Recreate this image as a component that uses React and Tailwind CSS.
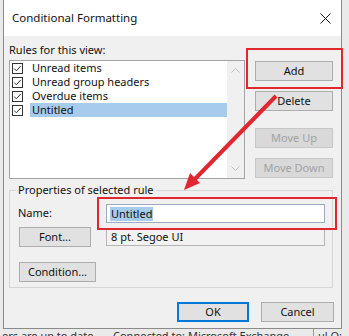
import React from "react";

const font = { fontFamily: '"Noto Sans", "Open Sans", sans-serif' };

function CheckBox() {
  return (
    <svg width="11" height="11" viewBox="0 0 11 11" className="flex-none">
      <rect x="0.5" y="0.5" width="10" height="10" fill="#fff" stroke="#333" />
      <path d="M2.2 5.6 L4.4 7.8 L8.8 2.9" fill="none" stroke="#333" strokeWidth="1" />
    </svg>
  );
}

function Knopf(props) {
  let cls = "flex items-center justify-center h-[20px] text-[11px] border ";
  if (props.disabled) {
    cls += "bg-[#d9d9d9] border-[#c6c6c6] text-[#a2a2a2]";
  } else if (props.focused) {
    cls += "bg-[#e1e1e1] border-2 border-[#0078d7] text-[#111]";
  } else {
    cls += "bg-[#e1e1e1] border-[#adadad] text-[#111]";
  }
  return <div className={cls + " " + props.className}>{props.children}</div>;
}

const regeln = [
  { name: "Unread items" },
  { name: "Unread group headers" },
  { name: "Overdue items" },
  { name: "Untitled", selected: true },
];

export default function App() {
  return (
    <div
      className="relative w-[349px] h-[336px] overflow-hidden bg-[#eaeaea] text-[#111]"
      style={font}
    >
      {/* dialog */}
      <div className="ml-[3px] w-[339px] h-[329px] flex flex-col border-x border-b border-[#8a8a8a] bg-[#f0f0f0]">
        <div className="h-[36px] flex-none bg-white flex items-center justify-between pl-[8px] pr-[10px]">
          <span className="text-[11.5px]">Conditional Formatting</span>
          <svg width="11" height="11" viewBox="0 0 11 11">
            <path d="M0.5 0.5 L10.5 10.5 M10.5 0.5 L0.5 10.5" stroke="#111" strokeWidth="1" />
          </svg>
        </div>

        <div className="flex flex-col pl-[5px] pr-[7px] pt-[6px]">
          <div className="h-[16px] leading-[16px] text-[11px] mb-[2px]">Rules for this view:</div>

          <div className="flex">
            {/* list */}
            <div className="w-[236px] h-[119px] flex border border-[#a3a3a3] bg-white">
              <div className="flex-1 flex flex-col">
                {regeln.map((r) => (
                  <div key={r.name} className="h-[14px] flex items-center pl-[2px]">
                    <CheckBox />
                    <span
                      className={
                        "ml-[7px] flex-1 h-[14px] leading-[14px] text-[11px] pl-[2px] " +
                        (r.selected ? "bg-[#a6cbeb]" : "")
                      }
                    >
                      {r.name}
                    </span>
                  </div>
                ))}
              </div>
              <div className="w-[17px] flex flex-col items-center justify-between py-[7px] bg-[#f0f0f0]">
                <svg width="9" height="5" viewBox="0 0 9 5">
                  <path d="M0.5 4.5 L4.5 0.5 L8.5 4.5" fill="none" stroke="#c0c0c0" />
                </svg>
                <svg width="9" height="5" viewBox="0 0 9 5">
                  <path d="M0.5 0.5 L4.5 4.5 L8.5 0.5" fill="none" stroke="#c0c0c0" />
                </svg>
              </div>
            </div>

            {/* buttons */}
            <div className="ml-[10px] w-[78px] flex flex-col">
              <Knopf className="mt-[1px]">Add</Knopf>
              <Knopf className="mt-[10px]">Delete</Knopf>
              <Knopf className="mt-[17px]" disabled>Move Up</Knopf>
              <Knopf className="mt-[10px]" disabled>Move Down</Knopf>
            </div>
          </div>

          {/* group box */}
          <fieldset className="mt-[3px] w-[324px] border border-[#d5d5d5] pt-[6px] pb-[5px]">
            <legend className="ml-[6px] px-[2px] h-[16px] leading-[16px] text-[11px]">
              Properties of selected rule
            </legend>
            <div className="pl-[8px]">
              <div className="flex items-center">
                <div className="w-[88px] text-[11px]">Name:</div>
                <div className="w-[219px] h-[19px] flex items-center border border-[#9aaabf] bg-white pl-[3px]">
                  <span className="bg-[#a6cbeb] h-[14px] leading-[14px] text-[11px] px-[1px]">Untitled</span>
                </div>
              </div>
              <div className="flex items-center mt-[4px]">
                <div className="w-[88px]">
                  <Knopf className="ml-[1px] w-[72px]">Font...</Knopf>
                </div>
                <div className="w-[219px] h-[18px] flex items-center border border-[#b5b5b5] bg-[#f2f2f2] pl-[4px] text-[11px]">
                  8 pt. Segoe UI
                </div>
              </div>
              <Knopf className="mt-[15px] ml-[1px] w-[77px]">Condition...</Knopf>
            </div>
          </fieldset>

          <div className="flex justify-end mt-[14px]">
            <Knopf className="w-[72px]" focused>OK</Knopf>
            <Knopf className="w-[73px] ml-[12px]">Cancel</Knopf>
          </div>
        </div>
      </div>

      {/* status bar of the window behind */}
      <div className="h-[7px] overflow-hidden flex text-[11px] leading-[13px] text-[#333]">
        <span className="w-[113px] pl-[2px] whitespace-nowrap overflow-hidden">ers are up to date.</span>
        <span className="w-[200px] whitespace-nowrap">Connected to: Microsoft Exchange</span>
        <span className="border-l border-[#999] pl-[4px] whitespace-nowrap">ul O:</span>
      </div>

      {/* annotations */}
      <div className="absolute left-[246px] top-[48px] w-[97px] h-[41px] border-2 border-[#e0262f]" />
      <div className="absolute left-[97px] top-[197px] w-[240px] h-[33px] border-2 border-[#e0262f]" />
      <svg className="absolute left-0 top-0 pointer-events-none" width="349" height="336">
        <line x1="276" y1="96" x2="194" y2="180" stroke="#e0262f" strokeWidth="4" />
        <polygon points="184,190 200,183 190,173" fill="#e0262f" />
      </svg>
    </div>
  );
}
